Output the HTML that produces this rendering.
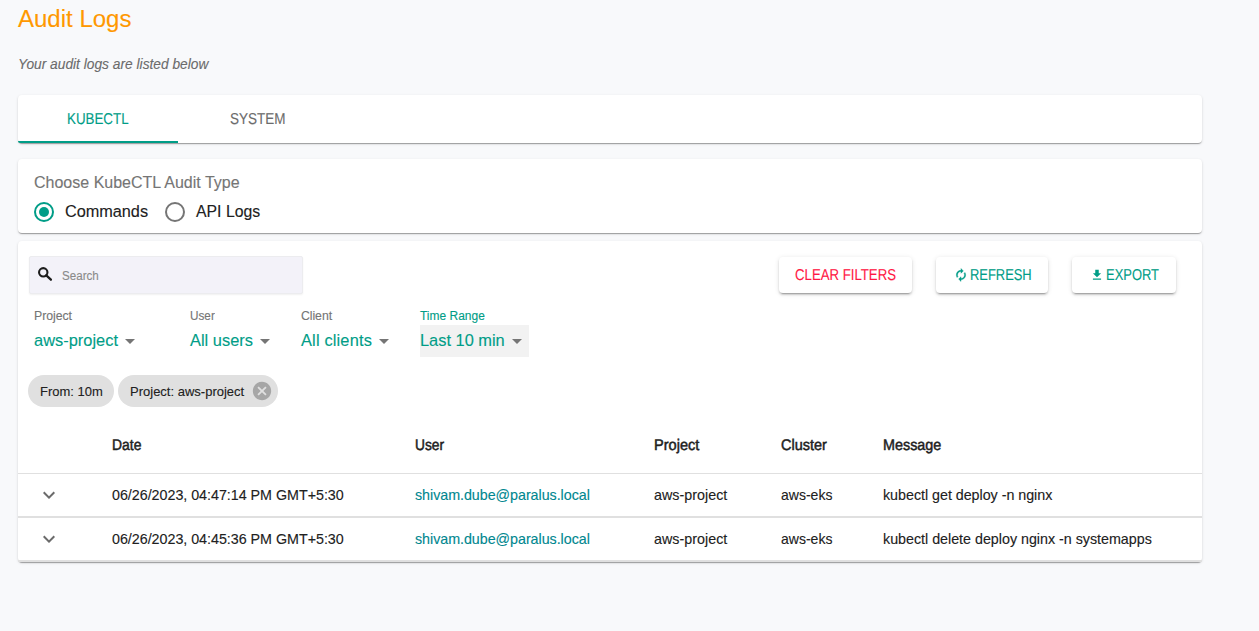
<!DOCTYPE html>
<html>
<head>
<meta charset="utf-8">
<title>Audit Logs</title>
<style>
  * { box-sizing: border-box; margin: 0; padding: 0; }
  html, body { width: 1259px; height: 631px; overflow: hidden; }
  body {
    background: #f8f9fb;
    font-family: "Liberation Sans", sans-serif;
    color: #212121;
    position: relative;
  }
  .abs { position: absolute; white-space: nowrap; }
  .t { position: absolute; white-space: nowrap; line-height: 1; transform-origin: 0 50%; font-weight: 400; -webkit-text-stroke: 0.12px; }
  .card {
    position: absolute;
    background: #fff;
    border-radius: 4px;
    box-shadow: 0 2px 1px -1px rgba(0,0,0,.2), 0 1px 1px 0 rgba(0,0,0,.14), 0 1px 3px 0 rgba(0,0,0,.12);
  }
  .btn {
    position: absolute; top: 257px; height: 36px; background: #fff; border-radius: 4px;
    box-shadow: 0 3px 1px -2px rgba(0,0,0,.2), 0 2px 2px 0 rgba(0,0,0,.14), 0 1px 5px 0 rgba(0,0,0,.12);
  }
  .radio { position: absolute; width: 20px; height: 20px; border-radius: 50%; border: 2px solid #757575; }
  .radio.on { border-color: #009d87; }
  .radio.on::after { content: ""; position: absolute; left: 3px; top: 3px; width: 10px; height: 10px; border-radius: 50%; background: #009d87; }
  .chip { position: absolute; top: 375px; height: 32px; border-radius: 16px; background: #e0e0e0; }
  .caret { position: absolute; width: 0; height: 0; border-left: 5px solid transparent; border-right: 5px solid transparent; border-top: 5px solid #757575; }
  .hr { position: absolute; left: 18px; width: 1184px; height: 1px; background: #e0e0e0; }
</style>
</head>
<body>

<!-- Tabs card -->
<div class="card" style="left:18px; top:95px; width:1184px; height:48px;"></div>
<div class="abs" style="left:18px; top:141px; width:160px; height:2px; background:#009d87; border-bottom-left-radius:2px;"></div>

<!-- Audit type card -->
<div class="card" style="left:18px; top:159px; width:1184px; height:74px;"></div>
<div class="radio on" style="left:34px; top:202px;"></div>
<div class="radio" style="left:165px; top:202px;"></div>

<!-- Main card -->
<div class="card" style="left:18px; top:241px; width:1184px; height:321px;"></div>

<!-- search -->
<div class="abs" style="left:29px; top:256px; width:274px; height:38px; background:#f3f2f9; border-radius:2px; border:1px solid #ececef; box-shadow:0 1px 2px rgba(0,0,0,.06);"></div>
<svg class="abs" style="left:36px; top:265px;" width="18" height="18" viewBox="0 0 18 18"><circle cx="7.25" cy="7.35" r="4.2" fill="none" stroke="#1c1c1c" stroke-width="2.1"/><path d="M10.300 10.400L14.900 14.700" stroke="#1c1c1c" stroke-width="2.3" stroke-linecap="round" fill="none"/></svg>

<!-- buttons -->
<div class="btn" style="left:779px; width:133px;"></div>
<div class="btn" style="left:936px; width:112px;"></div>
<svg class="abs" style="left:953.8px; top:267.6px;" width="14" height="14" viewBox="0 0 24 24"><path fill="#009d87" stroke="#009d87" stroke-width="0.7" d="M12 6v3l4-4-4-4v3c-4.420 0-8 3.580-8 8 0 1.570.46 3.030 1.240 4.260L6.700 14.800c-.45-.83-.7-1.790-.7-2.800 0-3.310 2.690-6 6-6zm6.760 1.740L17.300 9.200c.44.840.7 1.790.7 2.800 0 3.310-2.690 6-6 6v-3l-4 4 4 4v-3c4.420 0 8-3.580 8-8 0-1.570-.46-3.030-1.240-4.260z"/></svg>
<div class="btn" style="left:1072px; width:104px;"></div>
<svg class="abs" style="left:1089.9px; top:267.6px;" width="14" height="14" viewBox="0 0 24 24"><path fill="#009d87" d="M19 9h-4V3H9v6H5l7 7 7-7zM5 18v2h14v-2H5z"/></svg>

<!-- filters -->
<div class="caret" style="left:125px; top:339px;"></div>
<div class="caret" style="left:260px; top:339px;"></div>
<div class="caret" style="left:379px; top:339px;"></div>
<div class="abs" style="left:420px; top:325px; width:109px; height:32px; background:#f2f2f2;"></div>
<div class="caret" style="left:512px; top:339px;"></div>

<!-- chips -->
<div class="chip" style="left:28px; width:86px;"></div>
<div class="chip" style="left:118px; width:160px;"></div>
<svg class="abs" style="left:251px; top:380px;" width="22" height="22" viewBox="0 0 24 24"><path fill="#a6a6a6" d="M12 2C6.470 2 2 6.470 2 12s4.470 10 10 10 10-4.470 10-10S17.530 2 12 2zm5 13.590L15.590 17 12 13.410 8.410 17 7 15.590 10.590 12 7 8.410 8.410 7 12 10.590 15.590 7 17 8.410 13.410 12 17 15.590z"/></svg>

<!-- table lines -->
<div class="hr" style="top:473px;"></div>
<div class="hr" style="top:516px; height:2px;"></div>
<div class="hr" style="top:560px; height:2px;"></div>
<svg class="abs" style="left:37px; top:483px;" width="24" height="24" viewBox="0 0 24 24"><path fill="#6b6b6b" d="M7.410 8.590L12 13.170l4.590-4.580L18 10l-6 6-6-6 1.410-1.410z"/></svg>
<svg class="abs" style="left:37px; top:527px;" width="24" height="24" viewBox="0 0 24 24"><path fill="#6b6b6b" d="M7.410 8.590L12 13.170l4.590-4.580L18 10l-6 6-6-6 1.410-1.410z"/></svg>

<!-- text -->
<div class="t" id="title" style="left:18.2px;top:6.6px;font-size:24.6px;color:#ff9800;transform:scaleX(0.9765);">Audit Logs</div>
<div class="t" id="sub" style="left:18px;top:57px;font-size:14.3px;color:#6b6b6b;font-style:italic;transform:scaleX(0.9621);">Your audit logs are listed below</div>
<div class="t" id="tab1" style="left:67px;top:112px;font-size:15.8px;color:#009d87;text-rendering:geometricPrecision;-webkit-text-stroke:0.12px;transform:scaleX(0.8453);">KUBECTL</div>
<div class="t" id="tab2" style="left:230px;top:112px;font-size:15.8px;color:#6b6b6b;text-rendering:geometricPrecision;-webkit-text-stroke:0.12px;transform:scaleX(0.8543);">SYSTEM</div>
<div class="t" id="choose" style="left:34px;top:174px;font-size:16.3px;color:#757575;transform:scaleX(0.9833);">Choose KubeCTL Audit Type</div>
<div class="t" id="r1" style="left:65px;top:203px;font-size:16.3px;color:#212121;letter-spacing:-0.031px;">Commands</div>
<div class="t" id="r2" style="left:196px;top:203px;font-size:16.3px;color:#212121;transform:scaleX(0.9716);">API Logs</div>
<div class="t" id="search" style="left:62px;top:269.6px;font-size:12.3px;color:#8a8a8a;transform:scaleX(0.9443);">Search</div>
<div class="t" id="b1" style="left:794.5px;top:268px;font-size:15.8px;color:#ff1744;text-rendering:geometricPrecision;-webkit-text-stroke:0.12px;transform:scaleX(0.8357);">CLEAR FILTERS</div>
<div class="t" id="b2" style="left:970.2px;top:268px;font-size:15.8px;color:#009d87;text-rendering:geometricPrecision;-webkit-text-stroke:0.12px;transform:scaleX(0.8174);">REFRESH</div>
<div class="t" id="b3" style="left:1106px;top:268px;font-size:15.8px;color:#009d87;text-rendering:geometricPrecision;-webkit-text-stroke:0.12px;transform:scaleX(0.8195);">EXPORT</div>
<div class="t" id="l1" style="left:34px;top:309.8px;font-size:12.3px;color:#757575;letter-spacing:-0.040px;">Project</div>
<div class="t" id="l2" style="left:190px;top:309.8px;font-size:12.3px;color:#757575;transform:scaleX(0.9550);">User</div>
<div class="t" id="l3" style="left:301px;top:309.8px;font-size:12.3px;color:#757575;letter-spacing:-0.076px;">Client</div>
<div class="t" id="l4" style="left:420px;top:309.8px;font-size:12.3px;color:#009d87;transform:scaleX(0.9740);">Time Range</div>
<div class="t" id="v1" style="left:34px;top:332px;font-size:16.4px;color:#009d87;letter-spacing:0.017px;">aws-project</div>
<div class="t" id="v2" style="left:190px;top:332px;font-size:16.4px;color:#009d87;letter-spacing:0.016px;">All users</div>
<div class="t" id="v3" style="left:301px;top:332px;font-size:16.4px;color:#009d87;letter-spacing:0.161px;">All clients</div>
<div class="t" id="v4" style="left:420px;top:332px;font-size:16.4px;color:#009d87;">Last 10 min</div>
<div class="t" id="c1" style="left:40px;top:384.8px;font-size:13.3px;color:#212121;transform:scaleX(0.9770);">From: 10m</div>
<div class="t" id="c2" style="left:130.1px;top:384.8px;font-size:13.3px;color:#212121;transform:scaleX(0.9780);">Project: aws-project</div>
<div class="t" id="h1" style="left:112px;top:438px;font-size:15.4px;color:#212121;text-rendering:geometricPrecision;-webkit-text-stroke:0.5px #212121;transform:scaleX(0.9042);">Date</div>
<div class="t" id="h2" style="left:415px;top:438px;font-size:15.4px;color:#212121;text-rendering:geometricPrecision;-webkit-text-stroke:0.5px #212121;transform:scaleX(0.8954);">User</div>
<div class="t" id="h3" style="left:654px;top:438px;font-size:15.4px;color:#212121;text-rendering:geometricPrecision;-webkit-text-stroke:0.5px #212121;transform:scaleX(0.9456);">Project</div>
<div class="t" id="h4" style="left:781px;top:438px;font-size:15.4px;color:#212121;text-rendering:geometricPrecision;-webkit-text-stroke:0.5px #212121;transform:scaleX(0.9395);">Cluster</div>
<div class="t" id="h5" style="left:883px;top:438px;font-size:15.4px;color:#212121;text-rendering:geometricPrecision;-webkit-text-stroke:0.5px #212121;transform:scaleX(0.9335);">Message</div>
<div class="t" id="d1" style="left:112px;top:487.8px;font-size:14.3px;color:#212121;letter-spacing:-0.025px;">06/26/2023, 04:47:14 PM GMT+5:30</div>
<div class="t" id="u1" style="left:415px;top:487.8px;font-size:14.3px;color:#00878f;letter-spacing:-0.042px;">shivam.dube@paralus.local</div>
<div class="t" id="p1" style="left:654px;top:487.8px;font-size:14.3px;color:#212121;letter-spacing:0.017px;">aws-project</div>
<div class="t" id="k1" style="left:781px;top:487.8px;font-size:14.3px;color:#212121;transform:scaleX(0.9802);">aws-eks</div>
<div class="t" id="m1" style="left:883px;top:487.8px;font-size:14.3px;color:#212121;letter-spacing:-0.029px;">kubectl get deploy -n nginx</div>
<div class="t" id="d2" style="left:112px;top:531.8px;font-size:14.3px;color:#212121;letter-spacing:-0.025px;">06/26/2023, 04:45:36 PM GMT+5:30</div>
<div class="t" id="u2" style="left:415px;top:531.8px;font-size:14.3px;color:#00878f;letter-spacing:-0.042px;">shivam.dube@paralus.local</div>
<div class="t" id="p2" style="left:654px;top:531.8px;font-size:14.3px;color:#212121;letter-spacing:0.017px;">aws-project</div>
<div class="t" id="k2" style="left:781px;top:531.8px;font-size:14.3px;color:#212121;transform:scaleX(0.9802);">aws-eks</div>
<div class="t" id="m2" style="left:883px;top:531.8px;font-size:14.3px;color:#212121;letter-spacing:-0.015px;">kubectl delete deploy nginx -n systemapps</div>

</body>
</html>
